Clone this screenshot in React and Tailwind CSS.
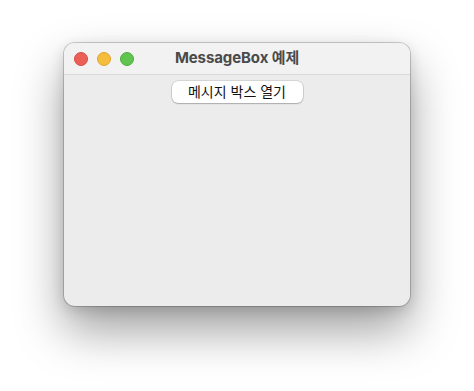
export default function App() {
  return (
    <div className="w-[474px] h-[391px] bg-white pt-[43px] pl-[64px] font-['Inter','Noto_Sans_CJK_KR',sans-serif]">
      <div className="w-[346px] h-[263px] rounded-[11px] bg-[#ececec] overflow-hidden shadow-[0_0_0_1px_rgba(0,0,0,0.18),0_24px_48px_rgba(0,0,0,0.38),0_4px_14px_rgba(0,0,0,0.14)] flex flex-col">
        {/* title bar */}
        <div className="relative h-[32px] shrink-0 bg-[#f2f2f2] border-b border-[#d9d9d9] flex items-center justify-center">
          <div className="absolute left-[10px] top-[9px] flex gap-[9px]">
            <span className="w-[14px] h-[14px] rounded-full bg-[#ec5f57] border border-[#d94b44]" />
            <span className="w-[14px] h-[14px] rounded-full bg-[#f4bd3c] border border-[#dea52d]" />
            <span className="w-[14px] h-[14px] rounded-full bg-[#5fc54f] border border-[#4dad3e]" />
          </div>
          <span className="text-[15px] font-bold text-[#4a4a4a] tracking-[-0.1px]">MessageBox 예제</span>
        </div>
        {/* content */}
        <div className="flex justify-center pt-[6px]">
          <button className="w-[131px] h-[22px] rounded-[6px] bg-white shadow-[0_0_0_0.5px_rgba(0,0,0,0.2),0_1px_1.5px_rgba(0,0,0,0.2)] text-[14px] font-normal text-[#111111] leading-none flex items-center justify-center">
            메시지 박스 열기
          </button>
        </div>
      </div>
    </div>
  );
}
